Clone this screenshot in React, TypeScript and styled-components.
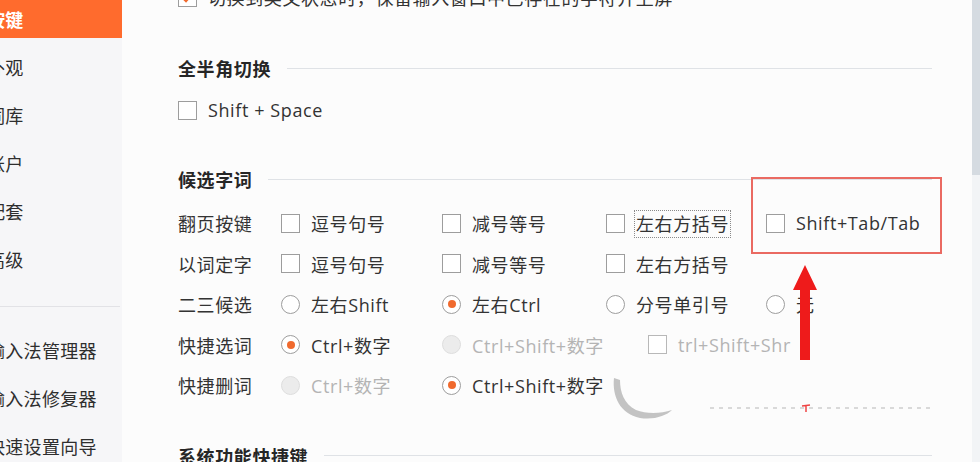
import React from 'react'
import styled, { createGlobalStyle } from 'styled-components'

const GlobalStyle = createGlobalStyle`
  html, body {
    margin: 0;
    padding: 0;
    background: #fcfcfc;
  }
  body {
    font-family: "Open Sans", "Noto Sans CJK SC", sans-serif;
    color: #333;
    letter-spacing: 0.6px;
  }
`

const Frame = styled.div`
  display: flex;
  width: 980px;
  height: 462px;
  overflow: hidden;
`

const Sidebar = styled.nav`
  width: 122px;
  flex-shrink: 0;
  background: #f6f6f8;
  overflow: hidden;
`

const NavList = styled.ul`
  list-style: none;
  margin: -5px 0 0;
  padding: 0;
`

const NavItem = styled.li`
  height: 48px;
  display: flex;
  align-items: center;
`

const NavLabel = styled.div<{ $active?: boolean }>`
  width: 100%;
  height: 38px;
  display: flex;
  align-items: center;
  font-size: 18px;
  letter-spacing: 0.3px;
  white-space: nowrap;
  color: ${p => (p.$active ? '#fff' : '#2e2e2e')};
  font-weight: ${p => (p.$active ? 700 : 400)};
  background: ${p => (p.$active ? '#ff6b2d' : 'transparent')};

  span {
    margin-left: -13px;
  }
`

const NavDivider = styled.li`
  height: 1px;
  width: 120px;
  background: #e2e2e6;
  margin: 23px 0 19px;
`

const Main = styled.main`
  position: relative;
  flex: 1;
  padding: 0 40px 0 56px;
  background: #fcfcfc;
  overflow: hidden;
`

const ScrollTrack = styled.div`
  width: 8px;
  flex-shrink: 0;
  background: #f2f4f6;
`

const ScrollThumb = styled.div`
  height: 175px;
  background: #d5dbe1;
`

const Row = styled.div<{ $offset?: number }>`
  display: flex;
  align-items: center;
  height: 24px;
  margin-top: ${p => p.$offset ?? 0}px;
`

const SectionHead = styled.div<{ $offset: number }>`
  display: flex;
  align-items: center;
  height: 24px;
  margin-top: ${p => p.$offset}px;
`

const SectionTitle = styled.h3`
  margin: 0;
  font-size: 18px;
  font-weight: 700;
  color: #262626;
  white-space: nowrap;
`

const Rule = styled.div`
  flex: 1;
  height: 1px;
  margin-left: 16px;
  background: #dfe2e6;
`

const Grid = styled.div`
  display: grid;
  grid-template-columns: 103px 161px 164px 160px 1fr;
  grid-auto-rows: 40.5px;
  margin-top: 12px;
`

const Cell = styled.div<{ $shift?: number }>`
  position: relative;
  display: flex;
  align-items: center;
  padding-left: ${p => p.$shift ?? 0}px;
  white-space: nowrap;
`

const RowLabel = styled.div`
  display: flex;
  align-items: center;
  font-size: 18px;
  color: #333;
`

const Box = styled.span<{ $round?: boolean; $disabled?: boolean; $ghost?: boolean }>`
  position: relative;
  flex-shrink: 0;
  width: 19px;
  height: 19px;
  box-sizing: border-box;
  margin-right: 11px;
  border: 1px solid ${p => (p.$disabled ? '#dedede' : p.$ghost ? '#b8b8b8' : '#9d9d9d')};
  border-radius: ${p => (p.$round ? '50%' : '0')};
  background: ${p => (p.$disabled ? '#ececec' : '#fff')};
`

const Dot = styled.span`
  position: absolute;
  left: 50%;
  top: 50%;
  width: 8px;
  height: 8px;
  margin: -4px 0 0 -4px;
  border-radius: 50%;
  background: #f06a2e;
`

const Tick = styled.svg`
  position: absolute;
  left: 0;
  top: 0;
`

const Text = styled.span<{ $disabled?: boolean }>`
  font-size: 18px;
  color: ${p => (p.$disabled ? '#b4b4b4' : '#333')};
`

const Focused = styled.span`
  outline: 1px dotted #8a8a8a;
  outline-offset: 1px;
`

const Highlight = styled.div`
  position: absolute;
  top: -26px;
  bottom: -10px;
  left: -15px;
  right: -10px;
  border: 2px solid #ea6a62;
  pointer-events: none;
`

const Arrow = styled.svg`
  position: absolute;
  left: 668px;
  top: 262px;
`

const Smear = styled.svg`
  position: absolute;
  left: 488px;
  top: 374px;
`

const Dashes = styled.svg`
  position: absolute;
  left: 588px;
  top: 404px;
`

type Kind = 'check' | 'radio'

type Opt = {
  kind: Kind
  text: string
  checked?: boolean
  disabled?: boolean
  ghost?: boolean
  focus?: boolean
  highlight?: boolean
  shift?: number
}

function Option({ o }: { o: Opt }) {
  return (
    <>
      <Box $round={o.kind === 'radio'} $disabled={o.disabled} $ghost={o.ghost}>
        {o.checked && o.kind === 'radio' && <Dot />}
      </Box>
      <Text $disabled={o.disabled || o.ghost}>
        {o.focus ? <Focused>{o.text}</Focused> : o.text}
      </Text>
    </>
  )
}

const rows: { label: string; opts: (Opt | null)[] }[] = [
  {
    label: '翻页按键',
    opts: [
      { kind: 'check', text: '逗号句号' },
      { kind: 'check', text: '减号等号' },
      { kind: 'check', text: '左右方括号', focus: true },
      { kind: 'check', text: 'Shift+Tab/Tab', highlight: true },
    ],
  },
  {
    label: '以词定字',
    opts: [
      { kind: 'check', text: '逗号句号' },
      { kind: 'check', text: '减号等号' },
      { kind: 'check', text: '左右方括号' },
      null,
    ],
  },
  {
    label: '二三候选',
    opts: [
      { kind: 'radio', text: '左右Shift' },
      { kind: 'radio', text: '左右Ctrl', checked: true },
      { kind: 'radio', text: '分号单引号' },
      { kind: 'radio', text: '无' },
    ],
  },
  {
    label: '快捷选词',
    opts: [
      { kind: 'radio', text: 'Ctrl+数字', checked: true },
      { kind: 'radio', text: 'Ctrl+Shift+数字', disabled: true },
      { kind: 'check', text: 'trl+Shift+Shr', ghost: true, shift: 42 },
      null,
    ],
  },
  {
    label: '快捷删词',
    opts: [
      { kind: 'radio', text: 'Ctrl+数字', disabled: true },
      { kind: 'radio', text: 'Ctrl+Shift+数字', checked: true },
      null,
      null,
    ],
  },
]

const nav = ['按键', '外观', '词库', '账户', '配套', '高级']
const tools = ['输入法管理器', '输入法修复器', '快速设置向导']

export default function App() {
  return (
    <Frame>
      <GlobalStyle />
      <Sidebar>
        <NavList>
          {nav.map((n, i) => (
            <NavItem key={n}>
              <NavLabel $active={i === 0}>
                <span>{n}</span>
              </NavLabel>
            </NavItem>
          ))}
          <NavDivider />
          {tools.map(n => (
            <NavItem key={n}>
              <NavLabel>
                <span>{n}</span>
              </NavLabel>
            </NavItem>
          ))}
        </NavList>
      </Sidebar>

      <Main>
        <Row $offset={-15}>
          <Box>
            <Tick width="17" height="17" viewBox="0 0 17 17">
              <path d="M3.5 8.5 L7 12 L13.5 4.5" fill="none" stroke="#f06a2e" strokeWidth="2.4" />
            </Tick>
          </Box>
          <Text>切换到英文状态时，保留输入窗口中已存在的字符并上屏</Text>
        </Row>

        <SectionHead $offset={47}>
          <SectionTitle>全半角切换</SectionTitle>
          <Rule />
        </SectionHead>
        <Row $offset={18}>
          <Box />
          <Text>Shift + Space</Text>
        </Row>

        <SectionHead $offset={45}>
          <SectionTitle>候选字词</SectionTitle>
          <Rule />
        </SectionHead>
        <Grid>
          {rows.map(r => (
            <React.Fragment key={r.label}>
              <RowLabel>{r.label}</RowLabel>
              {r.opts.map((o, i) => (
                <Cell key={i} $shift={o?.shift}>
                  {o && <Option o={o} />}
                  {o?.highlight && <Highlight />}
                </Cell>
              ))}
            </React.Fragment>
          ))}
        </Grid>

        <SectionHead $offset={38}>
          <SectionTitle>系统功能快捷键</SectionTitle>
          <Rule />
        </SectionHead>

        <Smear width="66" height="50" viewBox="0 0 66 50">
          <path d="M4 4 C2 22 10 40 30 44 C44 46 56 42 62 36 C50 40 36 40 26 36 C14 30 10 18 10 6 Z" fill="#b9b9b9" opacity="0.85" />
        </Smear>

        <Dashes width="224" height="8" viewBox="0 0 224 8">
          <line x1="0" y1="4" x2="224" y2="4" stroke="#9a9a9a" strokeWidth="1" strokeDasharray="4 5" opacity="0.7" />
          <path d="M92 2 L100 1 M96 1 L96 8" stroke="#e44" strokeWidth="1.5" />
        </Dashes>

        <Arrow width="30" height="100" viewBox="0 0 30 100">
          <path d="M15 3 L27 28 L20 28 L20 98 L10 98 L10 28 L3 28 Z" fill="#ee1b1b" />
        </Arrow>
      </Main>

      <ScrollTrack>
        <ScrollThumb />
      </ScrollTrack>
    </Frame>
  )
}
